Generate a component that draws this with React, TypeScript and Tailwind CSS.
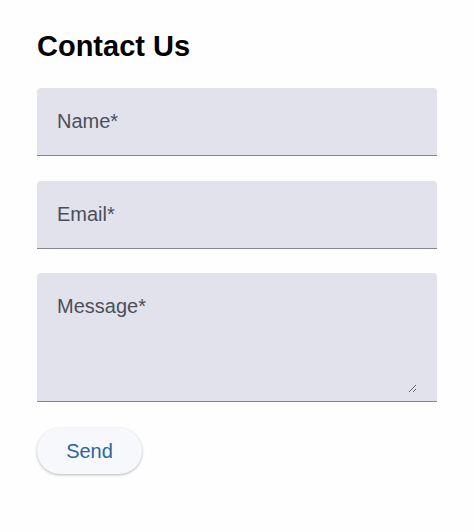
import { useState } from "react";

const fieldBase =
  "w-full rounded-t-[4px] border-b border-[#85858f] bg-[#e1e2ec] px-5 text-[20px] text-[#3f4350]";

const inputText = "outline-none placeholder:text-[#4c4f5a]";

const App = () => {
  const [form, setForm] = useState({ name: "", email: "", message: "" });

  return (
    <div
      className="min-h-[532px] bg-[#fefefe] px-[37px] pt-[29px]"
      style={{ fontFamily: '"Liberation Sans", Arial, sans-serif' }}
    >
      <h1 className="text-[29px] font-bold leading-[35px] text-black">Contact Us</h1>

      <form className="mt-[24px] flex w-[400px] flex-col" onSubmit={(e) => e.preventDefault()}>
        <input
          className={`${fieldBase} ${inputText} h-[68px]`}
          placeholder="Name*"
          value={form.name}
          onChange={(e) => setForm({ ...form, name: e.target.value })}
        />
        <input
          className={`${fieldBase} ${inputText} mt-[25px] h-[68px]`}
          placeholder="Email*"
          value={form.email}
          onChange={(e) => setForm({ ...form, email: e.target.value })}
        />
        {/* multiline field: textarea sits inside the padded box, so the grip is inset */}
        <div className={`${fieldBase} mt-[24px] flex h-[129px] flex-col pt-[21px] pb-[8px]`}>
          <textarea
            className={`${inputText} w-full flex-1 bg-transparent leading-[24px]`}
            placeholder="Message*"
            value={form.message}
            onChange={(e) => setForm({ ...form, message: e.target.value })}
          />
        </div>

        <div className="mt-[26px]">
          <button
            type="submit"
            className="h-[46px] w-[105px] rounded-full bg-[#f7f8fc] text-[20px] text-[#2c66a0] shadow-[0_1px_3px_rgba(0,0,0,0.28)]"
          >
            Send
          </button>
        </div>
      </form>
    </div>
  );
};

export default App;
